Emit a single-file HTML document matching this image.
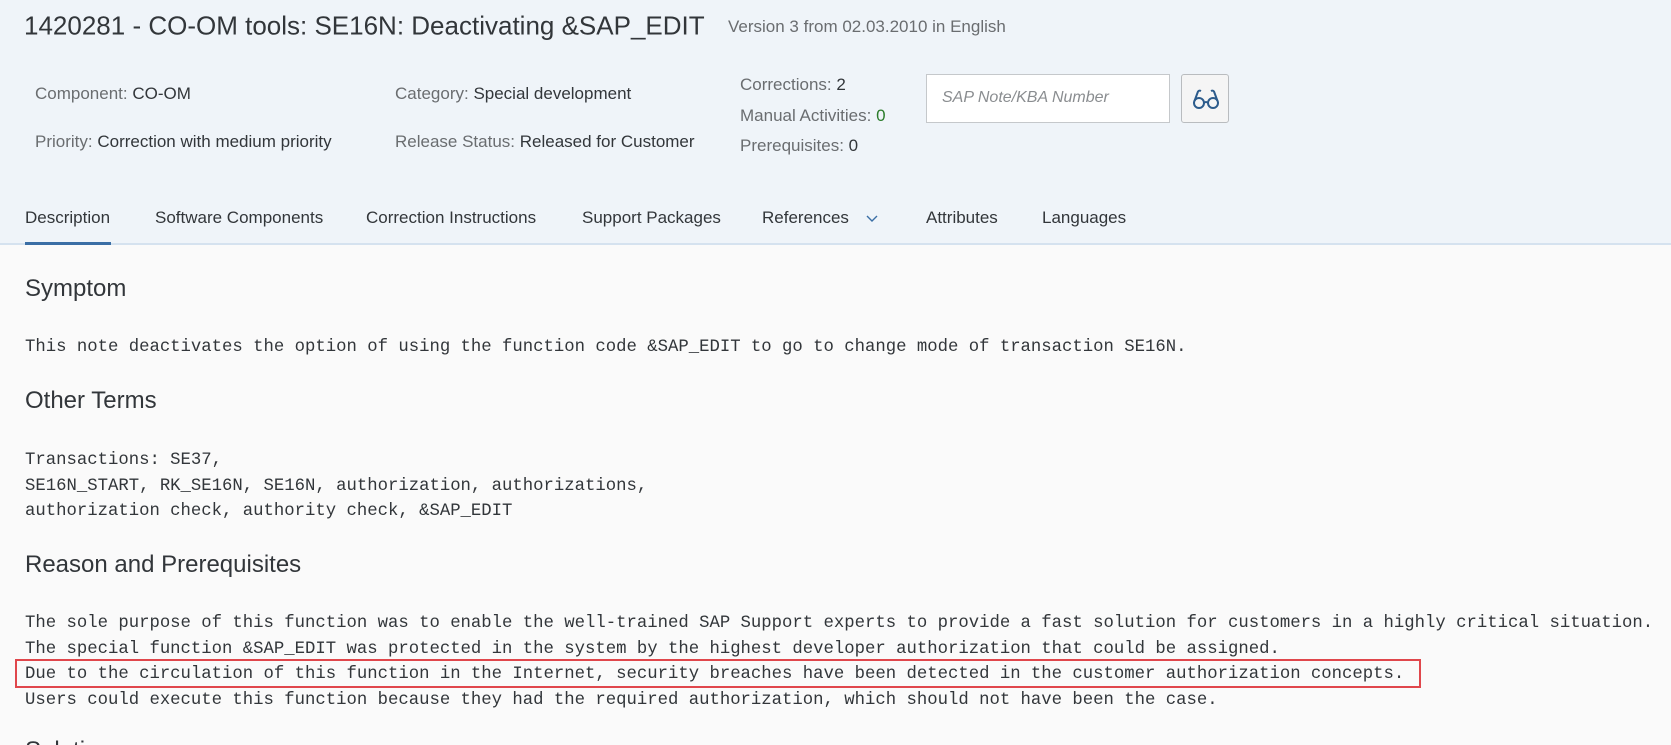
<!DOCTYPE html>
<html style="width:1671px;height:745px;overflow:hidden"><head><meta charset="utf-8"><style>
*{margin:0;padding:0;box-sizing:border-box}
body{width:1671px;height:745px;overflow:hidden;background:#fafafa;font-family:"Liberation Sans",sans-serif;color:#32363a;position:relative}
.hdr{position:absolute;left:0;top:0;width:1671px;height:245px;background:#eff4f9;border-bottom:2px solid #d5e2ef}
.a{position:absolute;white-space:nowrap;transform:translateY(-50%)}
.t{font-size:26px;color:#32363a}
.l{font-size:17px;color:#6a6d70}
.v{color:#32363a}
.tab{font-size:17px;color:#32363a}
.h{font-size:24px;color:#32363a}
.m{font-family:"Liberation Mono",monospace;font-size:17.3px;color:#32363a;line-height:25.6px}
.n{position:absolute}
</style></head><body>
<div class="hdr"></div>
<div class="a t" style="left:24px;top:26px">1420281 - CO-OM tools: SE16N: Deactivating &amp;SAP_EDIT</div>
<div class="a" style="left:728px;top:27px;font-size:17px;color:#6a6d70">Version 3 from 02.03.2010 in English</div>
<div class="a l" style="left:35px;top:94px">Component: <span class="v">CO-OM</span></div>
<div class="a l" style="left:35px;top:142px">Priority: <span class="v">Correction with medium priority</span></div>
<div class="a l" style="left:395px;top:94px">Category: <span class="v">Special development</span></div>
<div class="a l" style="left:395px;top:142px">Release Status: <span class="v">Released for Customer</span></div>
<div class="a l" style="left:740px;top:85px">Corrections: <span class="v">2</span></div>
<div class="a l" style="left:740px;top:116px">Manual Activities: <span style="color:#2b7c2b">0</span></div>
<div class="a l" style="left:740px;top:146px">Prerequisites: <span class="v">0</span></div>
<div class="n" style="left:926px;top:74px;width:244px;height:49px;background:#fff;border:1px solid #c5c8cb"></div>
<div class="a" style="left:942px;top:98px;font-size:16px;font-style:italic;color:#8a8d90">SAP Note/KBA Number</div>
<div class="n" style="left:1181px;top:74px;width:48px;height:49px;background:#f5f5f5;border:1px solid #b9bcbf;border-radius:3px"></div>
<svg class="n" style="left:1192px;top:88px" width="28" height="22" viewBox="0 0 28 22"><g fill="none" stroke="#2d5c8c" stroke-width="2"><circle cx="7" cy="15" r="5"/><circle cx="21" cy="15" r="5"/><path d="M12 15q2-2 4 0M2.5 13L6 3.5Q7 2 9 3M25.5 13L22 3.5Q21 2 19 3"/></g></svg>
<div class="a tab" style="left:25px;top:218px">Description</div>
<div class="n" style="left:25px;top:242px;width:86px;height:3px;background:#3a6ea5"></div>
<div class="a tab" style="left:155px;top:218px">Software Components</div>
<div class="a tab" style="left:366px;top:218px">Correction Instructions</div>
<div class="a tab" style="left:582px;top:218px">Support Packages</div>
<div class="a tab" style="left:762px;top:218px">References</div>
<svg class="n" style="left:866px;top:215px" width="12" height="8"><path d="M1 1l5 5 5-5" fill="none" stroke="#3a6ea5" stroke-width="1.4"/></svg>
<div class="a tab" style="left:926px;top:218px">Attributes</div>
<div class="a tab" style="left:1042px;top:218px">Languages</div>
<div class="a h" style="left:25px;top:289px">Symptom</div>
<div class="a m" style="left:25px;top:348px">This note deactivates the option of using the function code &amp;SAP_EDIT to go to change mode of transaction SE16N.</div>
<div class="a h" style="left:25px;top:401px">Other Terms</div>
<div class="n m" style="left:25px;top:448px;white-space:nowrap">Transactions: SE37,<br>SE16N_START, RK_SE16N, SE16N, authorization, authorizations,<br>authorization check, authority check, &amp;SAP_EDIT</div>
<div class="a h" style="left:25px;top:565px">Reason and Prerequisites</div>
<div class="n m" style="left:25px;top:611px;white-space:nowrap">The sole purpose of this function was to enable the well-trained SAP Support experts to provide a fast solution for customers in a highly critical situation.<br>The special function &amp;SAP_EDIT was protected in the system by the highest developer authorization that could be assigned.<br>Due to the circulation of this function in the Internet, security breaches have been detected in the customer authorization concepts.<br>Users could execute this function because they had the required authorization, which should not have been the case.</div>
<div class="n" style="left:15px;top:659px;width:1406px;height:29px;border:2px solid #e0474c"></div>
<div class="n h" style="left:25px;top:737px;white-space:nowrap">Solution</div>
</body></html>
